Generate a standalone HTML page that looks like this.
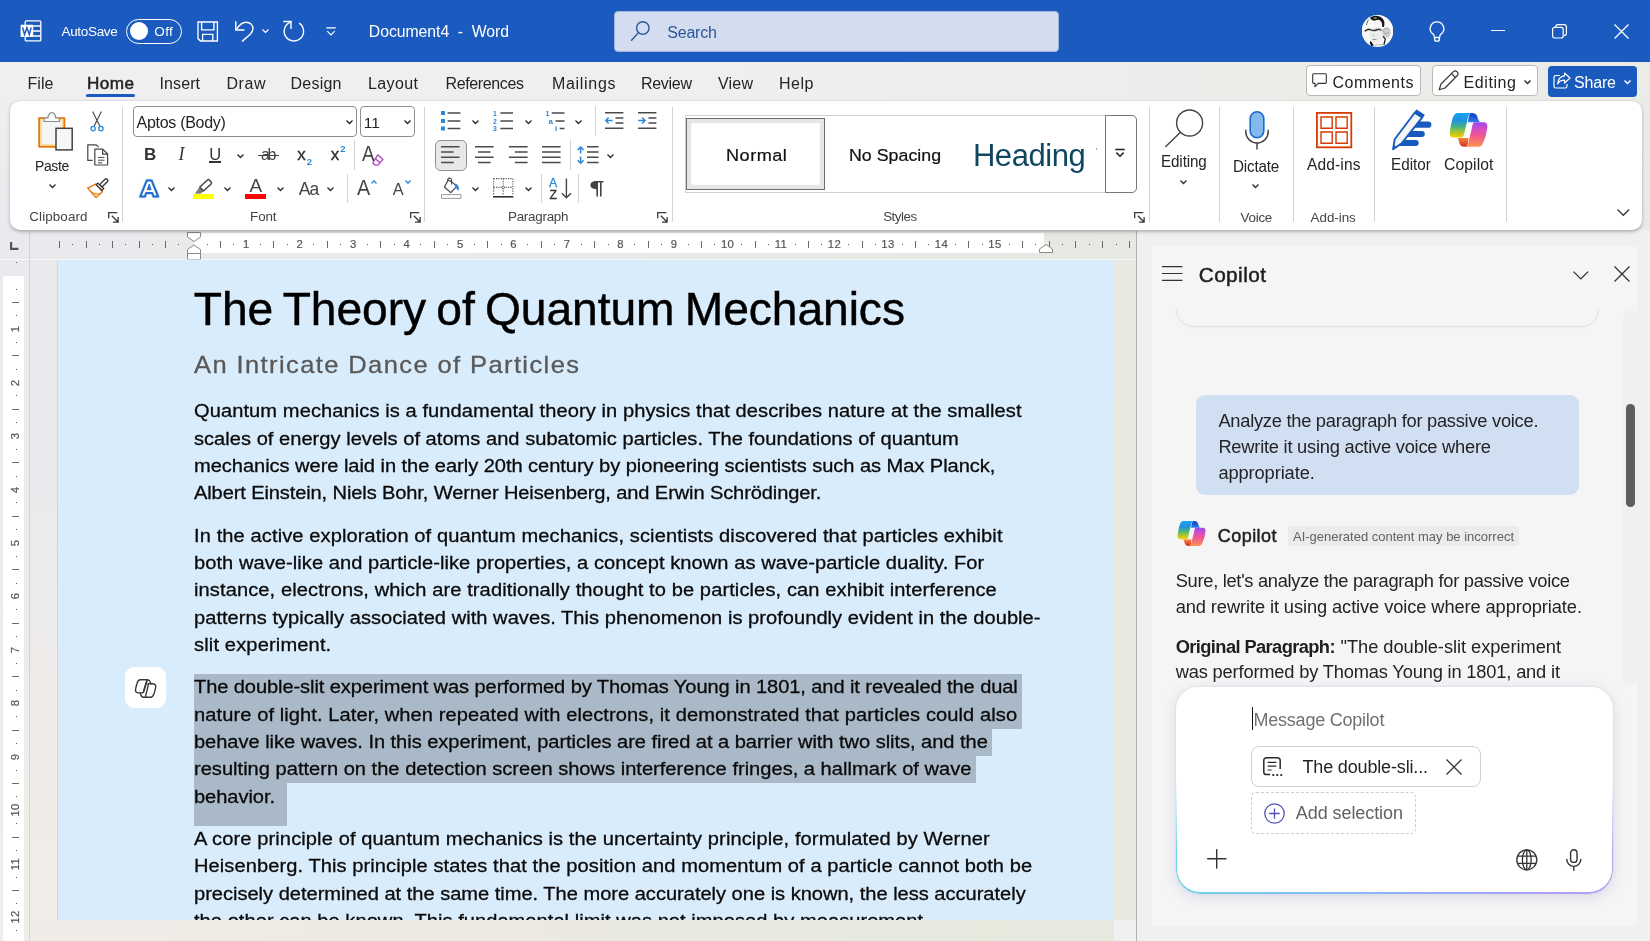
<!DOCTYPE html>
<html lang="en"><head><meta charset="utf-8"><title>Document4 - Word</title>
<style>
html,body{margin:0;padding:0;font-family:"Liberation Sans",sans-serif}
head,head *{font-family:"Liberation Sans",sans-serif}
body{width:1650px;height:941px;overflow:hidden;position:relative;background:#f0f0f0;font-family:"Liberation Sans",sans-serif;color:#242424;font-size:16px}
.a{position:absolute}
svg{position:absolute;overflow:visible}
#titlebar{left:0;top:0;width:1650px;height:62px;background:#1b5abe}
#tabs{left:0;top:62px;width:1650px;height:40px;background:linear-gradient(90deg,#efeff1 0,#efeff0 45%,#ecece9 80%,#ebebe8 100%)}
.w{color:#fff}
.sep{position:absolute;width:1px;background:#d4d4d4}
.chev{position:absolute;width:7px;height:4px}
/* rulers */
.ht{position:absolute;top:241px;width:1px;height:7px;background:#6a6a6a}
.hd{position:absolute;top:244px;width:1px;height:1px;background:#555}
.hn{position:absolute;top:237px;width:20px;text-align:center;font-size:11.300px;-webkit-text-stroke:.2px #555;font-weight:normal;color:#555;line-height:14px;letter-spacing:.3px}
.vt{position:absolute;left:12px;width:7px;height:1px;background:#6a6a6a}
.vd{position:absolute;left:15.5px;width:1px;height:1px;background:#555}
.vn{position:absolute;left:4.5px;width:20px;height:20px;text-align:center;font-size:11.300px;-webkit-text-stroke:.2px #555;font-weight:normal;color:#555;line-height:20px;transform:rotate(-90deg);letter-spacing:.3px}
.d{color:#0a0a0a;-webkit-text-stroke:.3px #0a0a0a}
.p{color:#242424}
#app{position:absolute;left:0;top:0;width:1650px;height:941px;overflow:hidden;will-change:transform}
</style></head><body><div id="app">
<div id="titlebar" class="a">
<!-- word icon -->
<svg style="left:20px;top:20px" width="22" height="22" viewBox="0 0 22 22">
<rect x="5.2" y="0.9" width="15.6" height="20" rx="1" fill="none" stroke="#fff" stroke-width="1.3"></rect>
<path d="M12.5 6h8M12.5 11h8M12.5 16h8" stroke="#fff" stroke-width="1.3"></path>
<rect x="0.6" y="4.8" width="12.6" height="12.2" rx=".6" fill="#fff"></rect>
<path d="M2.6 7.4l1.9 7 2.4-6.6 2.4 6.6 1.9-7" fill="none" stroke="#1b5abe" stroke-width="1.5" stroke-linejoin="miter"></path>
</svg>
<span class="w" style="position: absolute; white-space: pre; line-height: 1; font-size: 13.5px; left: 61.5px; top: 25px; letter-spacing: -0.321px; transform: none;">AutoSave</span>
<div class="a" style="left:125.5px;top:18.5px;width:54.5px;height:23.5px;border:1px solid #fff;border-radius:13px"></div>
<div class="a" style="left:129.5px;top:22px;width:18px;height:18px;border-radius:9px;background:#fff"></div>
<span class="w" style="position: absolute; white-space: pre; line-height: 1; font-size: 13.5px; left: 154.3px; top: 25px; letter-spacing: 0.367px; transform: none;">Off</span>
<!-- save -->
<svg style="left:197px;top:20.5px" width="22" height="21" viewBox="0 0 22 21" fill="none" stroke="#fff" stroke-width="1.35" stroke-linejoin="miter">
<path d="M1 1H20.4V20H3.400L1 17.600z"></path>
<path d="M4.600 1v7.800h12.300V1"></path><path d="M5.600 20v-6.600h10.200V20"></path>
</svg>
<!-- undo -->
<svg style="left:235px;top:20.5px" width="20" height="21" viewBox="0 0 20 21" fill="none" stroke="#fff" stroke-width="1.4" stroke-linecap="round" stroke-linejoin="miter">
<path d="M.8.8V9H9"></path><path d="M1.500 8.300C4.500 3.500 8 1.200 11 1.200c4 0 7 2.800 7 6.400 0 2.400-1 3.900-3 5.900L7.400 20.100"></path>
</svg>
<svg class="chev" style="left:262px;top:28.6px" viewBox="0 0 7 4"><path d="M.5.5l3 3 3-3" fill="none" stroke="#fff" stroke-width="1.2"></path></svg>
<!-- redo -->
<svg style="left:282.5px;top:21px" width="22" height="21" viewBox="0 0 22 21" fill="none" stroke="#fff" stroke-width="1.4" stroke-linecap="round" stroke-linejoin="miter">
<path d="M.7.500H8V7.600"></path><path d="M16.500 2.400A9.700 9.700 0 1 1 7.800 1.100"></path>
</svg>
<!-- qat customize -->
<svg style="left:326px;top:27px" width="10" height="9" viewBox="0 0 10 9" fill="none" stroke="#fff" stroke-width="1.2"><path d="M.3.8h9.400M1.300 4.200l3.700 3.700 3.700-3.700"></path></svg>
<span class="w" style="position: absolute; white-space: pre; line-height: 1; font-size: 15.8px; left: 368.8px; top: 24px; letter-spacing: -0.051px; transform: none;">Document4  -  Word</span>
<!-- search -->
<div class="a" style="left:614px;top:11px;width:443px;height:39px;border:1px solid #9fb3d9;border-radius:4px;background:#d3ddef"></div>
<svg style="left:631px;top:21px" width="19" height="20" viewBox="0 0 19 20" fill="none" stroke="#2b579a" stroke-width="1.400"><circle cx="11.800" cy="7" r="6.200"></circle><path d="M7.400 11.600L.6 19.200" stroke-linecap="round"></path></svg>
<span style="color: rgb(43, 87, 154); position: absolute; white-space: pre; line-height: 1; font-size: 16px; left: 667.3px; top: 25px; letter-spacing: -0.241px; transform: none;">Search</span>
<!-- avatar -->
<div class="a" style="left:1361.700px;top:15.400px;width:31.200px;height:31.200px;border-radius:16px;background:#f7f7f7;overflow:hidden">
<svg style="left:0;top:0" width="31.200" height="31.200" viewBox="0 0 31.200 31.200">
<rect width="31.200" height="31.200" fill="#f8f8f8"></rect>
<ellipse cx="14" cy="20" rx="7" ry="8" fill="#ececec"></ellipse>
<ellipse cx="24.500" cy="17.500" rx="4.200" ry="5.200" fill="#cfcfcf"></ellipse>
<path d="M21.500 14.500q3-2.500 6 0M22 18q2.500 1.500 5-.5" stroke="#9a9a9a" stroke-width=".8" fill="none"></path>
<path d="M8 2.800C10 1.200 12 .8 13.500.8c3 0 5.500 1 6.700 2.400 1.600 1.600 2.300 3.400 2.200 5.200 0 1.400-.2 2.600-.5 3.700l-1.800-.4c.2-1.600 0-3.300-.6-4.600-.8-1.400-1.800-2.100-3-2.300-1.600-.2-3 .9-4.500.9-1 0-1.900-.5-2.600-1.200C8.600 4 8.200 3.400 8 2.800z" fill="#161616"></path>
<ellipse cx="13.200" cy="3.100" rx="2" ry=".8" fill="#8d8d8d"></ellipse>
<path d="M6.800 4.600C5.400 6.300 4.700 8 4.500 10" stroke="#555" stroke-width=".9" fill="none"></path>
<path d="M3.300 15.900Q6 13.400 9 14.900q3 1.400 6-.2 2-.8 3.500 0" stroke="#3a3a3a" stroke-width="1.600" fill="none" stroke-linecap="round"></path>
<path d="M18.500 14.800q2 .3 3 1.500" stroke="#777" stroke-width=".9" fill="none"></path>
<path d="M10.500 24.300q2 .8 4 0" stroke="#7a7a7a" stroke-width=".9" fill="none"></path>
<path d="M11.800 19.500q-.8 1.600.4 2.300" stroke="#b5b5b5" stroke-width=".8" fill="none"></path>
<path d="M8.500 25.800l3.500 4.800-3 .4-1.200-3.200z" fill="#111"></path>
<path d="M21 21.400l2.300 2.800-1.400 5.600" stroke="#1d1d1d" stroke-width="1.300" fill="none" stroke-linejoin="round"></path>
<path d="M12.500 30.500q4-1.500 8.500-.5" stroke="#999" stroke-width=".7" fill="none"></path>
</svg></div>
<!-- lightbulb -->
<svg style="left:1428px;top:20.500px" width="18" height="21" viewBox="0 0 18 21" fill="none" stroke="#fff" stroke-width="1.300" stroke-linejoin="round"><path d="M9 .8a6.800 6.800 0 0 0-4 12.300c.7.600 1 1.200 1.200 2.200l.2 1.200h5.200l.2-1.200c.2-1 .5-1.600 1.200-2.200A6.800 6.800 0 0 0 9 .8z"></path><path d="M6.600 16.500v1.700a2 2 0 0 0 2 2h.8a2 2 0 0 0 2-2v-1.700"></path></svg>
<!-- window buttons -->
<div class="a" style="left:1491px;top:30px;width:14px;height:1.300px;background:#fff"></div>
<svg style="left:1552px;top:24px" width="15" height="15" viewBox="0 0 15 15" fill="none" stroke="#fff" stroke-width="1.200"><rect x=".6" y="3.400" width="10.600" height="10.600" rx="2"></rect><path d="M3.600 3.200V2.800A2.200 2.200 0 0 1 5.800.6h6.400a2.200 2.200 0 0 1 2.200 2.200v6.400a2.200 2.200 0 0 1-2.200 2.200h-.4"></path></svg>
<svg style="left:1614px;top:24px" width="15" height="15" viewBox="0 0 15 15" fill="none" stroke="#fff" stroke-width="1.300"><path d="M.5.5l14 14M14.500.5l-14 14"></path></svg>
</div>
<!-- DOC AREA backgrounds -->
<div class="a" style="left:0;top:230px;width:1136px;height:711px;background:linear-gradient(90deg,#eaeaee 0,#eaeaed 18%,#e8e9e6 70%,#e6e8e1 100%)"></div>
<!-- left gutter pink-beige fade -->
<div class="a" style="left:0;top:260px;width:58px;height:681px;background:linear-gradient(180deg,rgba(240,236,232,0) 0,rgba(240,236,232,0) 30%,rgba(240,236,232,.75) 62%,#f0ece8 85%)"></div>
<!-- bottom strip (beige gradient) -->
<div class="a" style="left:30px;top:920px;width:1084px;height:21px;background:linear-gradient(90deg,#f0ece8 0%,#eeebe5 25%,#eae9e0 55%,#e6e9dd 100%)"></div>
<div class="a" style="left:1114px;top:920px;width:22px;height:21px;background:#f0f0f0"></div>
<!-- right strip beside page -->
<div class="a" style="left:1114px;top:260px;width:22px;height:660px;background:linear-gradient(180deg,#e7e9e2,#e6e9dd 40%)"></div>
<!-- ribbon shadow on top of doc -->
<!-- horizontal ruler -->
<div class="a" style="left:193.600px;top:233px;width:850.500px;height:20.300px;background:#fff"></div>
<i class="ht" style="left:58.9px"></i><i class="hd" style="left:71.9px"></i><i class="ht" style="left:85.5px"></i><i class="hd" style="left:98.5px"></i><i class="ht" style="left:112.1px"></i><i class="hd" style="left:125.1px"></i><i class="ht" style="left:138.7px"></i><i class="hd" style="left:151.7px"></i><i class="ht" style="left:165.3px"></i><i class="hd" style="left:178.3px"></i><i class="hd" style="left:206.5px"></i><i class="ht" style="left:219.8px"></i><i class="hd" style="left:233.2px"></i><b class="hn" style="left:236.3px">1</b><i class="hd" style="left:259.9px"></i><i class="ht" style="left:273.3px"></i><i class="hd" style="left:286.7px"></i><b class="hn" style="left:289.7px">2</b><i class="hd" style="left:313.4px"></i><i class="ht" style="left:326.8px"></i><i class="hd" style="left:340.1px"></i><b class="hn" style="left:343.2px">3</b><i class="hd" style="left:366.9px"></i><i class="ht" style="left:380.2px"></i><i class="hd" style="left:393.6px"></i><b class="hn" style="left:396.7px">4</b><i class="hd" style="left:420.3px"></i><i class="ht" style="left:433.7px"></i><i class="hd" style="left:447.1px"></i><b class="hn" style="left:450.2px">5</b><i class="hd" style="left:473.8px"></i><i class="ht" style="left:487.2px"></i><i class="hd" style="left:500.6px"></i><b class="hn" style="left:503.6px">6</b><i class="hd" style="left:527.3px"></i><i class="ht" style="left:540.7px"></i><i class="hd" style="left:554.0px"></i><b class="hn" style="left:557.1px">7</b><i class="hd" style="left:580.8px"></i><i class="ht" style="left:594.1px"></i><i class="hd" style="left:607.5px"></i><b class="hn" style="left:610.6px">8</b><i class="hd" style="left:634.2px"></i><i class="ht" style="left:647.6px"></i><i class="hd" style="left:661.0px"></i><b class="hn" style="left:664.0px">9</b><i class="hd" style="left:687.7px"></i><i class="ht" style="left:701.1px"></i><i class="hd" style="left:714.4px"></i><b class="hn" style="left:717.5px">10</b><i class="hd" style="left:741.2px"></i><i class="ht" style="left:754.5px"></i><i class="hd" style="left:767.9px"></i><b class="hn" style="left:771.0px">11</b><i class="hd" style="left:794.6px"></i><i class="ht" style="left:808.0px"></i><i class="hd" style="left:821.4px"></i><b class="hn" style="left:824.4px">12</b><i class="hd" style="left:848.1px"></i><i class="ht" style="left:861.5px"></i><i class="hd" style="left:874.8px"></i><b class="hn" style="left:877.9px">13</b><i class="hd" style="left:901.6px"></i><i class="ht" style="left:914.9px"></i><i class="hd" style="left:928.3px"></i><b class="hn" style="left:931.4px">14</b><i class="hd" style="left:955.0px"></i><i class="ht" style="left:968.4px"></i><i class="hd" style="left:981.8px"></i><b class="hn" style="left:984.9px">15</b><i class="hd" style="left:1008.5px"></i><i class="ht" style="left:1021.9px"></i><i class="hd" style="left:1035.3px"></i><i class="ht" style="left:1048.6px"></i><i class="hd" style="left:1062.0px"></i><i class="ht" style="left:1075.4px"></i><i class="hd" style="left:1088.7px"></i><i class="ht" style="left:1102.1px"></i><i class="hd" style="left:1115.5px"></i><i class="ht" style="left:1128.8px"></i>
<!-- indent markers -->
<svg style="left:186.600px;top:232px" width="14" height="28" viewBox="0 0 14 28" fill="#fff" stroke="#8a8a8a" stroke-width="1">
<path d="M.5.500h13v4.500L7 9.500.5 5z"></path><path d="M.5 21.500V17.500L7 13l6.500 4.500v4z"></path><rect x=".5" y="21.500" width="13" height="6"></rect></svg>
<svg style="left:1038.900px;top:244.400px" width="14" height="10" viewBox="0 0 14 10" fill="#fff" stroke="#8a8a8a" stroke-width="1"><path d="M.5 8.500V5L7 .6 13.500 5v3.500z"></path></svg>
<!-- tab selector -->
<svg style="left:9.600px;top:242.400px" width="9" height="8" viewBox="0 0 9 8"><path d="M0 0h2.200v5.800H8.400V8H0z" fill="#555"></path></svg>
<!-- vertical ruler -->
<div class="a" style="left:3.200px;top:276.300px;width:20.900px;height:665px;background:#fff"></div>
<div class="a" style="left:0;top:0;width:30px;height:941px;overflow:hidden"><i class="vd" style="top:261.7px"></i><i class="vd" style="top:288.5px"></i><i class="vt" style="top:301.8px"></i><i class="vd" style="top:315.2px"></i><b class="vn" style="top:319.1px">1</b><i class="vd" style="top:341.9px"></i><i class="vt" style="top:355.3px"></i><i class="vd" style="top:368.7px"></i><b class="vn" style="top:372.5px">2</b><i class="vd" style="top:395.4px"></i><i class="vt" style="top:408.8px"></i><i class="vd" style="top:422.1px"></i><b class="vn" style="top:426.0px">3</b><i class="vd" style="top:448.9px"></i><i class="vt" style="top:462.2px"></i><i class="vd" style="top:475.6px"></i><b class="vn" style="top:479.5px">4</b><i class="vd" style="top:502.3px"></i><i class="vt" style="top:515.7px"></i><i class="vd" style="top:529.1px"></i><b class="vn" style="top:533.0px">5</b><i class="vd" style="top:555.8px"></i><i class="vt" style="top:569.2px"></i><i class="vd" style="top:582.6px"></i><b class="vn" style="top:586.4px">6</b><i class="vd" style="top:609.3px"></i><i class="vt" style="top:622.7px"></i><i class="vd" style="top:636.0px"></i><b class="vn" style="top:639.9px">7</b><i class="vd" style="top:662.8px"></i><i class="vt" style="top:676.1px"></i><i class="vd" style="top:689.5px"></i><b class="vn" style="top:693.4px">8</b><i class="vd" style="top:716.2px"></i><i class="vt" style="top:729.6px"></i><i class="vd" style="top:743.0px"></i><b class="vn" style="top:746.8px">9</b><i class="vd" style="top:769.7px"></i><i class="vt" style="top:783.1px"></i><i class="vd" style="top:796.4px"></i><b class="vn" style="top:800.3px">10</b><i class="vd" style="top:823.2px"></i><i class="vt" style="top:836.5px"></i><i class="vd" style="top:849.9px"></i><b class="vn" style="top:853.8px">11</b><i class="vd" style="top:876.6px"></i><i class="vt" style="top:890.0px"></i><i class="vd" style="top:903.4px"></i><b class="vn" style="top:907.2px">12</b><i class="vd" style="top:930.1px"></i><i class="vt" style="top:943.5px"></i></div>
<div class="a" style="left:29px;top:230.500px;width:1px;height:711px;background:#d2d2d4"></div>
<div class="a" style="left:0;top:259px;width:1136px;height:1px;background:rgba(255,255,255,.55)"></div>
<!-- page -->
<div class="a" style="left:57px;top:260px;width:1px;height:660px;background:#d3d6da"></div>
<div class="a" style="left:58px;top:260px;width:1056px;height:660px;background:#d9ecfc;overflow:hidden">
<div class="a" style="left:-58px;top:-260px">
<!-- selection highlight (coords in page space: left = x, top = y) -->
<div class="a" style="left:193.700px;top:674px;width:828.600px;height:27.400px;background:#aab9c8"></div>
<div class="a" style="left:193.700px;top:701.300px;width:827.900px;height:27.400px;background:#aab9c8"></div>
<div class="a" style="left:193.700px;top:728.600px;width:798.600px;height:27.400px;background:#aab9c8"></div>
<div class="a" style="left:193.700px;top:755.900px;width:782.100px;height:27.400px;background:#aab9c8"></div>
<div class="a" style="left:193.700px;top:783.200px;width:93.500px;height:42.400px;background:#aab9c8"></div>
</div></div>
<!-- pane divider -->
<div class="a" style="left:1135.700px;top:231px;width:1.400px;height:710px;background:#b2b2b4"></div>
<div class="a" style="left:1137px;top:230px;width:513px;height:711px;background:#f0f0f0"></div>
<!-- copilot margin icon -->
<div class="a" style="left:125px;top:667px;width:41.100px;height:41.400px;border-radius:9px;background:#fff"></div>
<svg style="left:135px;top:678.500px" width="22" height="19" viewBox="0 0 22 19" fill="none" stroke="#383838" stroke-width="1.400" stroke-linejoin="round" stroke-linecap="round">
<path d="M5.400.8h7L8.900 12.200c-.3 1.100-.9 1.700-2.100 1.700H3.400C1.400 13.900.2 12.600.5 10.800.8 8.600 1.300 6.400 2 4.400 2.700 2 3.600.8 5.400.8z"></path>
<path d="M12.400.8c1.500 0 2.400.8 2.800 2.100l.6 1.900"></path>
<path d="M13.400 4.800h4.300c2.100 0 3.300 1.400 3 3.200-.3 2.200-.9 4.600-1.600 6.600-.8 2.400-1.800 3.700-3.600 3.700h-5.200L13 7.400c.3-1.200-.4-2.600.4-2.600z"></path>
<path d="M5.200 13.900l.6 1.900c.4 1.500 1.400 2.500 3 2.500h1.600"></path>
<path d="M11.400 2.600L8.600 12"></path>
</svg>
<!-- DOC TEXT -->
<span style="color: rgb(0, 0, 0); -webkit-text-stroke: 0.45px rgb(0, 0, 0); position: absolute; white-space: pre; line-height: 1; font-size: 46.2px; left: 193.8px; top: 286px; letter-spacing: -0.064px; word-spacing: -2.5px; transform: none;">The Theory of Quantum Mechanics</span>
<span style="color: rgb(89, 89, 89); -webkit-text-stroke: 0.3px rgb(89, 89, 89); position: absolute; white-space: pre; line-height: 1; font-size: 23.2px; left: 194px; top: 354px; letter-spacing: 1.27px; transform: scaleX(1.1); transform-origin: 0px 0px;">An Intricate Dance of Particles</span>
<span class="d" style="position: absolute; white-space: pre; line-height: 1; font-size: 19.1px; left: 193.8px; top: 401px; letter-spacing: 0.074px; transform: scaleX(1.052); transform-origin: 0px 0px;">Quantum mechanics is a fundamental theory in physics that describes nature at the smallest</span>
<span class="d" style="position: absolute; white-space: pre; line-height: 1; font-size: 19.1px; left: 193.8px; top: 429px; letter-spacing: 0.017px; transform: scaleX(1.052); transform-origin: 0px 0px;">scales of energy levels of atoms and subatomic particles. The foundations of quantum</span>
<span class="d" style="position: absolute; white-space: pre; line-height: 1; font-size: 19.1px; left: 193.8px; top: 456px; letter-spacing: -0.05px; transform: scaleX(1.052); transform-origin: 0px 0px;">mechanics were laid in the early 20th century by pioneering scientists such as Max Planck,</span>
<span class="d" style="position: absolute; white-space: pre; line-height: 1; font-size: 19.1px; left: 193.8px; top: 483px; letter-spacing: -0.12px; transform: scaleX(1.052); transform-origin: 0px 0px;">Albert Einstein, Niels Bohr, Werner Heisenberg, and Erwin Schrödinger.</span>
<span class="d" style="position: absolute; white-space: pre; line-height: 1; font-size: 19.1px; left: 193.8px; top: 526px; letter-spacing: 0.095px; transform: scaleX(1.052); transform-origin: 0px 0px;">In the active exploration of quantum mechanics, scientists discovered that particles exhibit</span>
<span class="d" style="position: absolute; white-space: pre; line-height: 1; font-size: 19.1px; left: 193.8px; top: 553px; letter-spacing: 0.049px; transform: scaleX(1.052); transform-origin: 0px 0px;">both wave-like and particle-like properties, a concept known as wave-particle duality. For</span>
<span class="d" style="position: absolute; white-space: pre; line-height: 1; font-size: 19.1px; left: 193.8px; top: 580px; letter-spacing: 0.091px; transform: scaleX(1.052); transform-origin: 0px 0px;">instance, electrons, which are traditionally thought to be particles, can exhibit interference</span>
<span class="d" style="position: absolute; white-space: pre; line-height: 1; font-size: 19.1px; left: 193.8px; top: 608px; letter-spacing: 0.028px; transform: scaleX(1.052); transform-origin: 0px 0px;">patterns typically associated with waves. This phenomenon is profoundly evident in the double-</span>
<span class="d" style="position: absolute; white-space: pre; line-height: 1; font-size: 19.1px; left: 193.8px; top: 635px; letter-spacing: 0.134px; transform: scaleX(1.052); transform-origin: 0px 0px;">slit experiment.</span>
<span class="d" style="position: absolute; white-space: pre; line-height: 1; font-size: 19.1px; left: 193.8px; top: 677px; letter-spacing: -0.094px; transform: scaleX(1.052); transform-origin: 0px 0px;">The double-slit experiment was performed by Thomas Young in 1801, and it revealed the dual</span>
<span class="d" style="position: absolute; white-space: pre; line-height: 1; font-size: 19.1px; left: 193.8px; top: 705px; letter-spacing: 0.081px; transform: scaleX(1.052); transform-origin: 0px 0px;">nature of light. Later, when repeated with electrons, it demonstrated that particles could also</span>
<span class="d" style="position: absolute; white-space: pre; line-height: 1; font-size: 19.1px; left: 193.8px; top: 732px; letter-spacing: -0.045px; transform: scaleX(1.052); transform-origin: 0px 0px;">behave like waves. In this experiment, particles are fired at a barrier with two slits, and the</span>
<span class="d" style="position: absolute; white-space: pre; line-height: 1; font-size: 19.1px; left: 193.8px; top: 759px; letter-spacing: 0.003px; transform: scaleX(1.052); transform-origin: 0px 0px;">resulting pattern on the detection screen shows interference fringes, a hallmark of wave</span>
<span class="d" style="position: absolute; white-space: pre; line-height: 1; font-size: 19.1px; left: 193.8px; top: 787px; letter-spacing: -0.051px; transform: scaleX(1.052); transform-origin: 0px 0px;">behavior.</span>
<span class="d" style="position: absolute; white-space: pre; line-height: 1; font-size: 19.1px; left: 193.8px; top: 829px; letter-spacing: 0.097px; transform: scaleX(1.052); transform-origin: 0px 0px;">A core principle of quantum mechanics is the uncertainty principle, formulated by Werner</span>
<span class="d" style="position: absolute; white-space: pre; line-height: 1; font-size: 19.1px; left: 193.8px; top: 856px; letter-spacing: 0.069px; transform: scaleX(1.052); transform-origin: 0px 0px;">Heisenberg. This principle states that the position and momentum of a particle cannot both be</span>
<span class="d" style="position: absolute; white-space: pre; line-height: 1; font-size: 19.1px; left: 193.8px; top: 884px; letter-spacing: -0.02px; transform: scaleX(1.052); transform-origin: 0px 0px;">precisely determined at the same time. The more accurately one is known, the less accurately</span>
<div class="a" style="left:58px;top:260px;width:1056px;height:660px;overflow:hidden"><span class="d" style="position: absolute; white-space: pre; line-height: 1; font-size: 19.1px; left: 135.8px; top: 651px; letter-spacing: 0.033px; transform: scaleX(1.052); transform-origin: 0px 0px;">the other can be known. This fundamental limit was not imposed by measurement</span></div>
<!-- COPILOT PANE -->
<div class="a" style="left:1151.500px;top:245.800px;width:485.500px;height:680.300px;background:#f5f5f5"></div>
<!-- header -->
<svg style="left:1162.300px;top:266px" width="21" height="15" viewBox="0 0 21 15" stroke="#333" stroke-width="1.200"><path d="M0 .7h20.400M0 7.500h20.400M0 14.300h20.400"></path></svg>
<span style="color: rgb(31, 31, 31); -webkit-text-stroke: 0.5px rgb(31, 31, 31); position: absolute; white-space: pre; line-height: 1; font-size: 20.8px; left: 1198.7px; top: 265px; letter-spacing: 0.425px; transform: none;">Copilot</span>
<svg style="left:1572.500px;top:271px" width="16" height="9" viewBox="0 0 16 9" fill="none" stroke="#333" stroke-width="1.300"><path d="M.5.600l7.300 7.300L15.100.6"></path></svg>
<svg style="left:1614px;top:266px" width="16" height="16" viewBox="0 0 16 16" fill="none" stroke="#333" stroke-width="1.300"><path d="M.5.500l15 15M15.500.5l-15 15"></path></svg>
<!-- previous card bottom -->
<div class="a" style="left:1151.500px;top:309px;width:470px;height:21px;overflow:hidden"><div class="a" style="left:24px;top:-49px;width:421.500px;height:64.700px;border:1px solid #e2e2e2;border-radius:18px;background:#f5f5f5;box-shadow:0 1px 2px rgba(0,0,0,.04)"></div></div>
<!-- scroll track + thumb -->
<div class="a" style="left:1623px;top:310px;width:14px;height:376px;border-radius:7px;background:#f0f0f0"></div>
<div class="a" style="left:1626px;top:403.600px;width:8.600px;height:103.400px;border-radius:4.300px;background:#5e5e5e"></div>
<!-- user bubble -->
<div class="a" style="left:1196px;top:395px;width:382.500px;height:99.700px;border-radius:9px;background:#d1dff3"></div>
<span class="p" style="position: absolute; white-space: pre; line-height: 1; font-size: 18.3px; left: 1218.4px; top: 412px; letter-spacing: -0.261px; transform: none;">Analyze the paragraph for passive voice.</span>
<span class="p" style="position: absolute; white-space: pre; line-height: 1; font-size: 18.3px; left: 1218.4px; top: 438px; letter-spacing: -0.231px; transform: none;">Rewrite it using active voice where</span>
<span class="p" style="position: absolute; white-space: pre; line-height: 1; font-size: 18.3px; left: 1218.4px; top: 464px; letter-spacing: -0.107px; transform: none;">appropriate.</span>
<!-- copilot response header -->
<svg style="left:1177px;top:520px" width="29" height="27"><use href="#copilot"></use></svg>
<span style="color: rgb(31, 31, 31); -webkit-text-stroke: 0.5px rgb(31, 31, 31); position: absolute; white-space: pre; line-height: 1; font-size: 18px; left: 1217.7px; top: 527px; letter-spacing: 0.478px; transform: none;">Copilot</span>
<div class="a" style="left:1287.800px;top:526.200px;width:231px;height:20.300px;border-radius:4px;background:#ebebeb"></div>
<span style="color: rgb(97, 97, 97); position: absolute; white-space: pre; line-height: 1; font-size: 13px; left: 1293px; top: 530px; letter-spacing: -0.003px; transform: none;">AI-generated content may be incorrect</span>
<!-- response text -->
<span class="p" style="position: absolute; white-space: pre; line-height: 1; font-size: 18.3px; left: 1175.7px; top: 572px; letter-spacing: -0.293px; transform: none;">Sure, let's analyze the paragraph for passive voice</span>
<span class="p" style="position: absolute; white-space: pre; line-height: 1; font-size: 18.3px; left: 1175.7px; top: 598px; letter-spacing: -0.103px; transform: none;">and rewrite it using active voice where appropriate.</span>
<span class="p" style="font-weight: bold; color: rgb(31, 31, 31); position: absolute; white-space: pre; line-height: 1; font-size: 18.3px; left: 1175.7px; top: 638px; letter-spacing: -0.604px; transform: none;">Original Paragraph:</span>
<span class="p" style="position: absolute; white-space: pre; line-height: 1; font-size: 18.3px; left: 1340.5px; top: 638px; letter-spacing: -0.055px; transform: none;">"The double-slit experiment</span>
<span class="p" style="position: absolute; white-space: pre; line-height: 1; font-size: 18.3px; left: 1175.7px; top: 663px; letter-spacing: -0.174px; transform: none;">was performed by Thomas Young in 1801, and it</span>
<!-- input box -->
<div class="a" style="left:1175.900px;top:687px;width:437.200px;height:206.600px;border-radius:22px 22px 24px 24px;box-shadow:0 3px 14px rgba(110,110,190,.20),0 0 3px rgba(0,0,0,.10);background:#fff"></div>
<div class="a" style="left:1175.900px;top:687px;width:437.200px;height:206.600px;border-radius:22px 22px 24px 24px;opacity:.9;background:linear-gradient(90deg,#62cfe6 0,#79b6f4 35%,#9a9cf2 75%,#b596f0 100%);-webkit-mask-image:linear-gradient(180deg,transparent 0,transparent 45%,#000 80%);mask-image:linear-gradient(180deg,transparent 0,transparent 45%,#000 80%)"></div>
<div class="a" style="left:1177.200px;top:687px;width:434.600px;height:205.300px;border-radius:21px 21px 23px 23px;background:#fff"></div>
<div class="a" style="left:1252px;top:706.700px;width:1.200px;height:23px;background:#111"></div>
<span style="color: rgb(113, 113, 113); position: absolute; white-space: pre; line-height: 1; font-size: 18px; left: 1253.5px; top: 711px; letter-spacing: -0.227px; transform: none;">Message Copilot</span>
<!-- chip -->
<div class="a" style="left:1251.400px;top:746px;width:227.400px;height:38.700px;border:1px solid #d1d1d1;border-radius:8px;background:#fff"></div>
<svg style="left:1263px;top:756.600px" width="21" height="21" viewBox="0 0 21 21" fill="none" stroke="#2a2a2a" stroke-width="1.500" stroke-linejoin="round">
<path d="M7.200 17.600H3.400A2.600 2.600 0 0 1 .8 15V3.400A2.600 2.600 0 0 1 3.400.8h11.200a2.600 2.600 0 0 1 2.600 2.600V12"></path>
<path d="M4.600 5.400h8.800M4.600 9.200h8.800M4.600 13h4" stroke-width="1.200"></path>
<path d="M10.200 18h.100M14.200 18h.100M18.200 18h.100" stroke-width="2.200" stroke-linecap="round"></path></svg>
<span style="color: rgb(36, 36, 36); position: absolute; white-space: pre; line-height: 1; font-size: 18px; left: 1302.5px; top: 758px; letter-spacing: -0.161px; transform: none;">The double-sli...</span>
<svg style="left:1446px;top:759px" width="16" height="16" viewBox="0 0 16 16" fill="none" stroke="#333" stroke-width="1.300"><path d="M.5.500l15 15M15.500.5l-15 15"></path></svg>
<!-- add selection -->
<div class="a" style="left:1251.400px;top:792.300px;width:162.300px;height:39.700px;border:1px dashed #cdcdcd;border-radius:5px;background:#fff"></div>
<svg style="left:1264.200px;top:802.700px" width="21" height="21" viewBox="0 0 21 21" fill="none" stroke="#4f52b2" stroke-width="1.300" stroke-linecap="round"><circle cx="10.500" cy="10.500" r="9.700"></circle><path d="M10.500 5.800v9.400M5.800 10.500h9.400"></path></svg>
<span style="color: rgb(97, 97, 97); position: absolute; white-space: pre; line-height: 1; font-size: 18px; left: 1295.8px; top: 804px; letter-spacing: -0.073px; transform: none;">Add selection</span>
<!-- bottom icons -->
<svg style="left:1207.300px;top:848.800px" width="20" height="20" viewBox="0 0 20 20" stroke="#333" stroke-width="1.400" stroke-linecap="round"><path d="M9.700.6v18.400M.6 9.700h18.400"></path></svg>
<svg style="left:1516px;top:848.800px" width="22" height="22" viewBox="0 0 22 22" fill="none" stroke="#333" stroke-width="1.300"><circle cx="10.800" cy="10.800" r="10"></circle><ellipse cx="10.800" cy="10.800" rx="4.400" ry="10"></ellipse><path d="M10.800.8v20M1.600 7.200h18.400M1.600 14.400h18.400"></path></svg>
<svg style="left:1566px;top:848.800px" width="16" height="22" viewBox="0 0 16 22" fill="none" stroke="#333" stroke-width="1.400" stroke-linecap="round"><rect x="4.600" y=".8" width="6.400" height="12.600" rx="3.200"></rect><path d="M.8 10.400a7 7 0 0 0 14 0M7.800 17.600v3.600"></path></svg>
<div id="tabs" class="a"></div>
<span style="position: absolute; white-space: pre; line-height: 1; font-size: 16px; left: 27.5px; top: 76px; letter-spacing: 0.073px; transform: none;">File</span>
<span style="-webkit-text-stroke: 0.5px rgb(36, 36, 36); position: absolute; white-space: pre; line-height: 1; font-size: 16px; left: 86.5px; top: 76px; letter-spacing: 0.413px; transform: scaleX(1.07); transform-origin: 0px 0px;">Home</span>
<div class="a" style="left:86px;top:94px;width:49px;height:3px;border-radius:1.5px;background:#185abd"></div>
<span style="position: absolute; white-space: pre; line-height: 1; font-size: 16px; left: 159.5px; top: 76px; letter-spacing: 0.097px; transform: none;">Insert</span>
<span style="position: absolute; white-space: pre; line-height: 1; font-size: 16px; left: 226.5px; top: 76px; letter-spacing: 0.552px; transform: none;">Draw</span>
<span style="position: absolute; white-space: pre; line-height: 1; font-size: 16px; left: 290.5px; top: 76px; letter-spacing: 0.238px; transform: none;">Design</span>
<span style="position: absolute; white-space: pre; line-height: 1; font-size: 16px; left: 368px; top: 76px; letter-spacing: 0.391px; transform: none;">Layout</span>
<span style="position: absolute; white-space: pre; line-height: 1; font-size: 16px; left: 445.5px; top: 76px; letter-spacing: -0.37px; transform: none;">References</span>
<span style="position: absolute; white-space: pre; line-height: 1; font-size: 16px; left: 552px; top: 76px; letter-spacing: 0.688px; transform: none;">Mailings</span>
<span style="position: absolute; white-space: pre; line-height: 1; font-size: 16px; left: 641px; top: 76px; letter-spacing: -0.294px; transform: none;">Review</span>
<span style="position: absolute; white-space: pre; line-height: 1; font-size: 16px; left: 718px; top: 76px; letter-spacing: 0.203px; transform: none;">View</span>
<span style="position: absolute; white-space: pre; line-height: 1; font-size: 16px; left: 779px; top: 76px; letter-spacing: 0.531px; transform: none;">Help</span>
<!-- right buttons -->
<div class="a" style="left:1306px;top:65px;width:113px;height:29.400px;border:1px solid #b9b9b9;border-radius:4px;background:#fff"></div>
<svg style="left:1312px;top:73px" width="15" height="15" viewBox="0 0 15 15" fill="none" stroke="#333" stroke-width="1.100" stroke-linejoin="round"><path d="M1.500.8h12a.8.8 0 0 1 .8.8v8a.8.8 0 0 1-.8.8H6.200L3 13.600v-3.200H1.500a.8.8 0 0 1-.8-.8v-8a.8.8 0 0 1 .8-.8z"></path></svg>
<span style="position: absolute; white-space: pre; line-height: 1; font-size: 16px; left: 1332.5px; top: 75px; letter-spacing: 0.52px; transform: none;">Comments</span>
<div class="a" style="left:1431.500px;top:65px;width:104px;height:29.400px;border:1px solid #b9b9b9;border-radius:4px;background:#fff"></div>
<svg style="left:1438px;top:70px" width="21" height="21" viewBox="0 0 21 21" fill="none" stroke="#333" stroke-width="1.200" stroke-linejoin="round"><path d="M15.500 1.600a2.300 2.300 0 0 1 3.300 0l.6.600a2.300 2.300 0 0 1 0 3.300L7 18l-5.800 1.800L3 14z"></path><path d="M13.500 3.600l3.900 3.900"></path></svg>
<span style="position: absolute; white-space: pre; line-height: 1; font-size: 16px; left: 1463.5px; top: 75px; letter-spacing: 0.596px; transform: none;">Editing</span>
<svg class="chev" style="left:1524px;top:80px" viewBox="0 0 7 4"><path d="M.5.500l3 3 3-3" fill="none" stroke="#2a2a2a" stroke-width="1.500"></path></svg>
<div class="a" style="left:1547.500px;top:66px;width:89.500px;height:30.500px;border-radius:4px;background:#185abd"></div>
<svg style="left:1553px;top:72px" width="18" height="17" viewBox="0 0 18 17" fill="none" stroke="#fff" stroke-width="1.200" stroke-linejoin="round" stroke-linecap="round"><path d="M6.500 3.500H2.800A1.800 1.800 0 0 0 1 5.300v8.900A1.800 1.800 0 0 0 2.800 16h9.400a1.800 1.800 0 0 0 1.800-1.800v-1.700"></path><path d="M11.500 1l5.500 5-5.500 5V8.200C8 8.200 6 9.500 4.600 12 5 7.500 7.500 4.200 11.500 3.800z"></path></svg>
<span class="w" style="position: absolute; white-space: pre; line-height: 1; font-size: 16px; left: 1574px; top: 75px; letter-spacing: -0.176px; transform: none;">Share</span>
<svg class="chev" style="left:1624px;top:80px" viewBox="0 0 7 4"><path d="M.5.500l3 3 3-3" fill="none" stroke="#fff" stroke-width="1.500"></path></svg>
<!-- ribbon card -->
<div class="a" style="left:0;top:100px;width:24px;height:130px;background:linear-gradient(180deg,#efeff1 0,#eaeaee 80%)"></div>
<div class="a" style="left:1630px;top:100px;width:20px;height:130px;background:linear-gradient(180deg,#ebebe8 0,#e8e8e4 100%)"></div>
<div class="a" style="left:10px;top:100.5px;width:1632px;height:129px;border-radius:10px;background:#fff;box-shadow:0 1.500px 3.500px rgba(0,0,0,.26),0 0 1px rgba(0,0,0,.12)"></div>
<!-- CLIPBOARD -->
<svg style="left:37px;top:111px" width="37" height="40" viewBox="0 0 37 40" fill="none">
<rect x="2.100" y="7.100" width="25.300" height="28.700" fill="#fbdc94" stroke="#e8730e" stroke-width="1.700"></rect>
<rect x="4.700" y="9.700" width="20.100" height="23.500" fill="#f5f5f5"></rect>
<path d="M7.200 10.500V7h3.700c0-2.600 1.500-5.400 3.900-5.400s3.900 2.800 3.900 5.400h3.700v3.500z" fill="#fafafa" stroke="#8c8c8c" stroke-width="1.200" stroke-linejoin="round"></path>
<rect x="19" y="17.300" width="16.200" height="21.600" fill="#f7f7f7" stroke="#444" stroke-width="1.500"></rect>
</svg>
<span style="position: absolute; white-space: pre; line-height: 1; font-size: 15.5px; left: 35.4px; top: 158px; letter-spacing: -0.41px; transform: scaleX(0.9); transform-origin: 0px 0px;">Paste</span>
<svg class="chev" style="left:48.500px;top:184px" viewBox="0 0 7 4"><path d="M.5.500l3 3 3-3" fill="none" stroke="#2e2e2e" stroke-width="1.400"></path></svg>
<!-- cut -->
<svg style="left:89.900px;top:111.200px" width="14" height="21" viewBox="0 0 14 21" fill="none" stroke-width="1.100">
<path d="M2.600.5l7.300 14.800M11.400.5L4.100 15.300" stroke="#444"></path>
<circle cx="3.100" cy="17.600" r="2.200" stroke="#2b88d8" stroke-width="1.300"></circle><circle cx="10.900" cy="17.600" r="2.200" stroke="#2b88d8" stroke-width="1.300"></circle>
</svg>
<!-- copy -->
<svg style="left:86.500px;top:144px" width="22" height="22" viewBox="0 0 22 22" fill="none" stroke="#444" stroke-width="1.200" stroke-linejoin="round">
<path d="M5.600 16.400H.8V.8h8.400l2.400 2.400"></path>
<path d="M7.800 5.200h8l4.800 4.800v11H7.800z" fill="#fff"></path><path d="M15.600 5.400v4.800h4.800"></path>
<path d="M11 13.400h6.400M11 16.200h6.400M11 18.800h4.400" stroke-width="1"></path>
</svg>
<!-- format painter -->
<svg style="left:87px;top:177.500px" width="22" height="21" viewBox="0 0 22 21" fill="none" stroke-linejoin="round" stroke-linecap="round">
<path d="M9.200 5.800L.6 10.100l8.500 9.500 6.300-5.900z" fill="#fff" stroke="#e8730e" stroke-width="1.400"></path>
<path d="M3.400 13.300l5.700 6.300 4-3.800c-3.400.6-6.800-.2-9.700-2.500z" fill="#fbdc94" stroke="#e8730e" stroke-width="1"></path>
<path d="M14.800 6.800l4.400-4.300" stroke="#333" stroke-width="4.600"></path><path d="M14.800 6.800l4.400-4.300" stroke="#fff" stroke-width="1.900"></path>
<path d="M9.600 5.600l6.700 6.300" stroke="#333" stroke-width="3.800" stroke-linecap="butt"></path><path d="M10.400 6.400l5.100 4.800" stroke="#fff" stroke-width="1.100" stroke-linecap="butt"></path>
</svg>
<span style="color: rgb(68, 68, 68); position: absolute; white-space: pre; line-height: 1; font-size: 13.4px; left: 29.3px; top: 210px; letter-spacing: 0.109px; transform: none;">Clipboard</span>
<svg style="left:107.500px;top:212.300px" width="11" height="11" viewBox="0 0 11 11" fill="none" stroke="#3a3a3a" stroke-width="1.300"><path d="M.7 6.200V.7h8.600M3.800 3.800l6 6M10.100 5v5.100H5"></path></svg>
<div class="sep" style="left:122px;top:107px;height:115px"></div>
<!-- FONT -->
<div class="a" style="left:133.300px;top:106.200px;width:221.500px;height:28.700px;border:1px solid #8e8e8e;border-radius:4px;background:#fff"></div>
<span style="position: absolute; white-space: pre; line-height: 1; font-size: 16px; left: 136.5px; top: 115px; letter-spacing: -0.28px; transform: none;">Aptos (Body)</span>
<svg class="chev" style="left:346px;top:120px" viewBox="0 0 7 4"><path d="M.5.500l3 3 3-3" fill="none" stroke="#222" stroke-width="1.300"></path></svg>
<div class="a" style="left:360px;top:106.200px;width:52.700px;height:28.700px;border:1px solid #8e8e8e;border-radius:4px;background:#fff"></div>
<span style="position: absolute; white-space: pre; line-height: 1; font-size: 15.5px; left: 363.8px; top: 115px; letter-spacing: -0.094px; transform: none;">11</span>
<svg class="chev" style="left:403.500px;top:120px" viewBox="0 0 7 4"><path d="M.5.500l3 3 3-3" fill="none" stroke="#222" stroke-width="1.300"></path></svg>
<!-- row 2 -->
<span style="font-weight: bold; color: rgb(51, 51, 51); position: absolute; white-space: pre; line-height: 1; font-size: 17px; left: 144px; top: 146px; letter-spacing: -2.281px; transform: none;">B</span>
<span style="font-family: &quot;Liberation Serif&quot;, serif; font-style: italic; color: rgb(51, 51, 51); position: absolute; white-space: pre; line-height: 1; font-size: 18px; left: 178.5px; top: 145px; letter-spacing: 1px; transform: none;">I</span>
<span style="color: rgb(51, 51, 51); position: absolute; white-space: pre; line-height: 1; font-size: 16.5px; left: 209.3px; top: 146px; letter-spacing: 0.078px; transform: none;">U</span>
<div class="a" style="left:209.300px;top:161.400px;width:12px;height:1.300px;background:#333"></div>
<svg class="chev" style="left:236.800px;top:154px" viewBox="0 0 7 4"><path d="M.5.500l3 3 3-3" fill="none" stroke="#2e2e2e" stroke-width="1.400"></path></svg>
<span style="color: rgb(68, 68, 68); position: absolute; white-space: pre; line-height: 1; font-size: 16px; left: 261px; top: 147px; letter-spacing: -2.297px; transform: none;">ab</span>
<div class="a" style="left:258px;top:155.300px;width:21px;height:1.200px;background:#444"></div>
<span style="color: rgb(51, 51, 51); -webkit-text-stroke: 0.4px rgb(51, 51, 51); position: absolute; white-space: pre; line-height: 1; font-size: 17px; left: 297.3px; top: 146px; letter-spacing: 0.5px; transform: none;">x</span>
<span style="color: rgb(43, 136, 216); font-weight: bold; position: absolute; white-space: pre; line-height: 1; font-size: 9.5px; left: 306.8px; top: 157px; letter-spacing: -0.297px; transform: none;">2</span>
<span style="color: rgb(51, 51, 51); -webkit-text-stroke: 0.4px rgb(51, 51, 51); position: absolute; white-space: pre; line-height: 1; font-size: 17px; left: 330.7px; top: 146px; letter-spacing: 0.5px; transform: none;">x</span>
<span style="color: rgb(43, 136, 216); font-weight: bold; position: absolute; white-space: pre; line-height: 1; font-size: 9.5px; left: 340.3px; top: 144px; letter-spacing: -0.297px; transform: none;">2</span>
<div class="sep" style="left:354px;top:140.300px;height:29.500px"></div>
<!-- clear formatting -->
<span style="color: rgb(68, 68, 68); position: absolute; white-space: pre; line-height: 1; font-size: 21.5px; left: 362.2px; top: 144px; letter-spacing: -0.707px; transform: scaleX(0.88); transform-origin: 0px 0px;">A</span>
<svg style="left:371.500px;top:153.500px" width="12" height="12" viewBox="0 0 12 12" fill="#fff" stroke="#b146c2" stroke-width="1.300" stroke-linejoin="round"><path d="M5.800.8l5.200 4.600-5 5.800H3.200L.8 9z"></path><path d="M3 4.200l5 4.600"></path></svg>
<!-- row 3 -->
<svg style="left:139px;top:178.600px" width="21" height="19" viewBox="0 0 21 19" stroke-linejoin="round">
<path d="M1.300 17.600L7.900 1.400h4.600l6.600 16.200h-4.500l-1.300-3.500H7.100l-1.300 3.500z" fill="#fff" stroke="#bcd8f6" stroke-width="3.400"></path>
<path d="M1.300 17.600L7.900 1.400h4.600l6.600 16.200h-4.500l-1.300-3.500H7.100l-1.300 3.500z" fill="#fff" stroke="#1f6fc9" stroke-width="2"></path>
<path d="M8.300 10.700h3.800l-1.900-5.500z" fill="#2b7cd3" stroke="#1f6fc9" stroke-width="1"></path></svg>
<svg class="chev" style="left:167.500px;top:186.500px" viewBox="0 0 7 4"><path d="M.5.500l3 3 3-3" fill="none" stroke="#2e2e2e" stroke-width="1.400"></path></svg>
<!-- highlighter -->
<svg style="left:192.500px;top:178.500px" width="21" height="15" viewBox="0 0 21 15" fill="none" stroke-linejoin="round">
<path d="M6.900 8l3.400 4-2.500 2.200-5.200.1z" fill="#7c7c7c" stroke="#7c7c7c" stroke-width=".8"></path>
<path d="M6.900 8L14.400 1a1.500 1.500 0 0 1 2.100.2l1.600 1.900a1.500 1.500 0 0 1-.2 2.100L10.300 12z" fill="#fff" stroke="#444" stroke-width="1.500"></path>
</svg>
<div class="a" style="left:192.800px;top:194px;width:21.200px;height:4.900px;background:#ffff00"></div>
<svg class="chev" style="left:224px;top:186.500px" viewBox="0 0 7 4"><path d="M.5.500l3 3 3-3" fill="none" stroke="#2e2e2e" stroke-width="1.400"></path></svg>
<span style="color: rgb(68, 68, 68); position: absolute; white-space: pre; line-height: 1; font-size: 19px; left: 249.6px; top: 176px; letter-spacing: -0.187px; transform: none;">A</span>
<div class="a" style="left:245.300px;top:194px;width:20.800px;height:4.900px;background:#ff0000"></div>
<svg class="chev" style="left:276.500px;top:186.500px" viewBox="0 0 7 4"><path d="M.5.500l3 3 3-3" fill="none" stroke="#2e2e2e" stroke-width="1.400"></path></svg>
<span style="color: rgb(68, 68, 68); position: absolute; white-space: pre; line-height: 1; font-size: 17.5px; left: 298.7px; top: 181px; letter-spacing: -0.906px; transform: none;">Aa</span>
<svg class="chev" style="left:326.700px;top:186.500px" viewBox="0 0 7 4"><path d="M.5.500l3 3 3-3" fill="none" stroke="#2e2e2e" stroke-width="1.400"></path></svg>
<div class="sep" style="left:347px;top:173.700px;height:29.800px"></div>
<span style="color: rgb(68, 68, 68); position: absolute; white-space: pre; line-height: 1; font-size: 21.5px; left: 357px; top: 178px; letter-spacing: -0.213px; transform: scaleX(0.92); transform-origin: 0px 0px;">A</span>
<svg style="left:370.500px;top:179.500px" width="6" height="4" viewBox="0 0 6 4"><path d="M.5 3.500L3 .8l2.500 2.700" fill="none" stroke="#2b88d8" stroke-width="1.300"></path></svg>
<span style="color: rgb(68, 68, 68); position: absolute; white-space: pre; line-height: 1; font-size: 16.3px; left: 392.8px; top: 181px; letter-spacing: -0.375px; transform: none;">A</span>
<svg style="left:404.500px;top:180px" width="6" height="4" viewBox="0 0 6 4"><path d="M.5.500L3 3.200 5.500.5" fill="none" stroke="#2b88d8" stroke-width="1.300"></path></svg>
<span style="color: rgb(68, 68, 68); position: absolute; white-space: pre; line-height: 1; font-size: 13.4px; left: 250.1px; top: 210px; letter-spacing: -0.132px; transform: none;">Font</span>
<svg style="left:410px;top:212.300px" width="11" height="11" viewBox="0 0 11 11" fill="none" stroke="#3a3a3a" stroke-width="1.300"><path d="M.7 6.200V.7h8.600M3.800 3.800l6 6M10.100 5v5.100H5"></path></svg>
<div class="sep" style="left:424px;top:107px;height:115px"></div>
<!-- PARAGRAPH row 1 -->
<svg style="left:440.800px;top:111px" width="20" height="20" viewBox="0 0 20 20" fill="none">
<path d="M0 .1h4v4H0zM0 8h4v4H0zM0 15.600h4v4H0z" fill="#2b88d8"></path>
<path d="M6.600 2.100h12.800M6.600 10h12.800M6.600 17.600h12.800" stroke="#4a4a4a" stroke-width="1.500"></path></svg>
<svg class="chev" style="left:472px;top:120px" viewBox="0 0 7 4"><path d="M.5.500l3 3 3-3" fill="none" stroke="#2e2e2e" stroke-width="1.400"></path></svg>
<svg style="left:492.500px;top:111px" width="21" height="21" viewBox="0 0 21 21" fill="none">
<path d="M7.400 2.100h12.600M7.400 10h12.600M7.400 17.600h12.600" stroke="#4a4a4a" stroke-width="1.500"></path>
<text x="0" y="5.200" font-size="6.800" font-weight="bold" fill="#2b88d8" font-family="Liberation Sans">1</text>
<text x="0" y="12.800" font-size="6.800" font-weight="bold" fill="#2b88d8" font-family="Liberation Sans">2</text>
<text x="0" y="20.400" font-size="6.800" font-weight="bold" fill="#2b88d8" font-family="Liberation Sans">3</text></svg>
<svg class="chev" style="left:524.500px;top:120px" viewBox="0 0 7 4"><path d="M.5.500l3 3 3-3" fill="none" stroke="#2e2e2e" stroke-width="1.400"></path></svg>
<svg style="left:545.300px;top:111px" width="21" height="21" viewBox="0 0 21 21" fill="none">
<path d="M6.700 2.100h12.800M10.500 10h9M14.700 17.600h4.800" stroke="#4a4a4a" stroke-width="1.500"></path>
<text x=".4" y="5" font-size="7.200" font-weight="bold" fill="#2b88d8" font-family="Liberation Sans">1</text>
<text x="3.600" y="12.600" font-size="8" font-weight="bold" fill="#2b88d8" font-family="Liberation Sans">a</text>
<text x="10" y="20.400" font-size="8" font-weight="bold" fill="#2b88d8" font-family="Liberation Sans">i</text></svg>
<svg class="chev" style="left:574.700px;top:120px" viewBox="0 0 7 4"><path d="M.5.500l3 3 3-3" fill="none" stroke="#2e2e2e" stroke-width="1.400"></path></svg>
<div class="sep" style="left:595px;top:106.200px;height:30px"></div>
<svg style="left:604.500px;top:112.300px" width="19" height="17" viewBox="0 0 19 17" fill="none" stroke="#444" stroke-width="1.200">
<path d="M0 .8h18.400M10.500 6h7.900M10.500 11.100h7.900M0 16.300h18.400" stroke="#4a4a4a" stroke-width="1.500"></path><path d="M7.600 8.500H.8M3.600 5.500L.8 8.500l2.800 3" stroke="#2b88d8" stroke-width="1.500"></path></svg>
<svg style="left:637.900px;top:112.300px" width="19" height="17" viewBox="0 0 19 17" fill="none" stroke="#444" stroke-width="1.200">
<path d="M0 .8h18.400M10.500 6h7.900M10.500 11.100h7.900M0 16.300h18.400" stroke="#4a4a4a" stroke-width="1.500"></path><path d="M.2 8.500H7M4.200 5.500L7 8.500l-2.800 3" stroke="#2b88d8" stroke-width="1.500"></path></svg>
<!-- row 2 -->
<div class="a" style="left:435px;top:139.500px;width:29.700px;height:29px;border:1px solid #8e8e8e;border-radius:5.500px;background:#e8e8e8"></div>
<svg style="left:441.300px;top:145.700px" width="20" height="18" viewBox="0 0 20 18" stroke="#4a4a4a" stroke-width="1.500"><path d="M0 .7h18.600M0 6h12.700M0 11.300h18.600M0 16.600h12.700"></path></svg>
<svg style="left:474.700px;top:145.700px" width="20" height="18" viewBox="0 0 20 18" stroke="#4a4a4a" stroke-width="1.500"><path d="M0 .7h18.600M3 6h12.600M0 11.300h18.600M3 16.600h12.600"></path></svg>
<svg style="left:508.500px;top:145.700px" width="20" height="18" viewBox="0 0 20 18" stroke="#4a4a4a" stroke-width="1.500"><path d="M0 .7h18.600M5.900 6h12.700M0 11.300h18.600M5.900 16.600h12.700"></path></svg>
<svg style="left:542.100px;top:145.700px" width="20" height="18" viewBox="0 0 20 18" stroke="#4a4a4a" stroke-width="1.500"><path d="M0 .7h18.600M0 6h18.600M0 11.300h18.600M0 16.600h18.600"></path></svg>
<div class="sep" style="left:570px;top:140.300px;height:29.500px"></div>
<svg style="left:577.300px;top:145.700px" width="22" height="18" viewBox="0 0 22 18" fill="none" stroke="#444" stroke-width="1.200">
<path d="M10 .7h11.600M10 6h11.600M10 11.300h11.600M10 16.600h11.600" stroke="#4a4a4a" stroke-width="1.500"></path><path d="M3.600 1v6.600M.6 4L3.600 1l3 3M3.600 17.200v-6.600M.6 14.200l3 3 3-3" stroke="#2b88d8" stroke-width="1.500"></path></svg>
<svg class="chev" style="left:606.700px;top:154px" viewBox="0 0 7 4"><path d="M.5.500l3 3 3-3" fill="none" stroke="#2e2e2e" stroke-width="1.400"></path></svg>
<!-- row 3 -->
<svg style="left:440.800px;top:178px" width="21" height="21" viewBox="0 0 21 21" fill="none" stroke-linejoin="round">
<path d="M7.200 2.200L3.400 9l6.400 5.600 6-6.200-5.600-5z" stroke="#444" stroke-width="1.200" fill="#fff"></path>
<path d="M10.600 6.400V2a2 2 0 0 0-3.600-1l-.6 1.400" stroke="#444" stroke-width="1.100"></path>
<path d="M13.600 6.200c2.600.4 4 2.400 3.600 5.600-.8-1.800-1.800-2.600-3-2.800" stroke="#2b88d8" stroke-width="1.300" fill="#2b88d8"></path>
<rect x=".5" y="16.600" width="19.500" height="3.800" stroke="#9a9a9a" stroke-width="1" fill="#fff"></rect></svg>
<svg class="chev" style="left:472px;top:186.500px" viewBox="0 0 7 4"><path d="M.5.500l3 3 3-3" fill="none" stroke="#2e2e2e" stroke-width="1.400"></path></svg>
<svg style="left:492.500px;top:178.200px" width="21" height="20" viewBox="0 0 21 20" fill="none">
<path d="M.6.600h19.200M.6.600v16M19.800.6v16M10.200.6v16M.6 9.400h19.200" stroke="#555" stroke-width="1.100" stroke-dasharray="1.200 1.200"></path>
<circle cx="10.200" cy="9.400" r="1.300" fill="#fff" stroke="#555" stroke-width=".8"></circle>
<path d="M0 18.800h20.400" stroke="#333" stroke-width="1.600"></path></svg>
<svg class="chev" style="left:524.500px;top:186.500px" viewBox="0 0 7 4"><path d="M.5.500l3 3 3-3" fill="none" stroke="#2e2e2e" stroke-width="1.400"></path></svg>
<div class="sep" style="left:541px;top:173.700px;height:29.800px"></div>
<span style="color: rgb(43, 136, 216); -webkit-text-stroke: 0.3px rgb(43, 136, 216); position: absolute; white-space: pre; line-height: 1; font-size: 12.3px; left: 549px; top: 177px; letter-spacing: 1.297px; transform: none;">A</span>
<span style="color: rgb(51, 51, 51); -webkit-text-stroke: 0.3px rgb(51, 51, 51); position: absolute; white-space: pre; line-height: 1; font-size: 12.3px; left: 549.5px; top: 189px; letter-spacing: 0.984px; transform: none;">Z</span>
<svg style="left:560.500px;top:178.200px" width="11" height="21" viewBox="0 0 11 21" fill="none" stroke="#444" stroke-width="1.400"><path d="M5.400.4v19.400M.8 15.200l4.600 4.600 4.600-4.600"></path></svg>
<div class="sep" style="left:578px;top:173.700px;height:29.800px"></div>
<svg style="left:590px;top:181px" width="14" height="16" viewBox="0 0 14 16"><path d="M6.400 0h7v1.400h-1.800V15.400H10V1.400H8v14H6.400V8.200C2.800 8.200.4 6.600.4 4.100S2.800 0 6.400 0z" fill="#444"></path></svg>
<span style="color: rgb(68, 68, 68); position: absolute; white-space: pre; line-height: 1; font-size: 13.4px; left: 508px; top: 210px; letter-spacing: -0.256px; transform: none;">Paragraph</span>
<svg style="left:657.300px;top:212.300px" width="11" height="11" viewBox="0 0 11 11" fill="none" stroke="#3a3a3a" stroke-width="1.300"><path d="M.7 6.200V.7h8.600M3.800 3.800l6 6M10.100 5v5.100H5"></path></svg>
<div class="sep" style="left:672px;top:107px;height:115px"></div>
<!-- STYLES -->
<div class="a" style="left:685.400px;top:115.200px;width:449.300px;height:76.200px;border:1px solid #d0d0d0;border-radius:0 5px 5px 0;background:#fff"></div>
<div class="a" style="left:686.300px;top:118.200px;width:137px;height:69.800px;border:1px solid #6e6e6e;background:#fff;box-shadow:inset 0 0 0 4.200px #e6e6e6"></div>
<span style="color: rgb(17, 17, 17); -webkit-text-stroke: 0.2px rgb(17, 17, 17); position: absolute; white-space: pre; line-height: 1; font-size: 16.8px; left: 725.5px; top: 148px; letter-spacing: 0.459px; transform: scaleX(1.08); transform-origin: 0px 0px;">Normal</span>
<span style="color: rgb(17, 17, 17); -webkit-text-stroke: 0.2px rgb(17, 17, 17); position: absolute; white-space: pre; line-height: 1; font-size: 16.8px; left: 849.1px; top: 148px; letter-spacing: 0.013px; transform: scaleX(1.06); transform-origin: 0px 0px;">No Spacing</span>
<span style="color: rgb(15, 71, 97); position: absolute; white-space: pre; line-height: 1; font-size: 31px; left: 972.9px; top: 140px; letter-spacing: -0.431px; transform: none;">Heading</span>
<div class="a" style="left:1096px;top:148px;width:1px;height:2px;background:#9ab"></div>
<div class="a" style="left:1105.400px;top:115.200px;width:29.300px;height:76.200px;border:1px solid #777;border-radius:0 5px 5px 0;background:#fff"></div>
<svg style="left:1114.600px;top:148.500px" width="10" height="8" viewBox="0 0 10 8" fill="none" stroke="#222" stroke-width="1.500"><path d="M.2.600h9.600M1.400 3.600L5 7.200l3.600-3.600"></path></svg>
<span style="color: rgb(68, 68, 68); position: absolute; white-space: pre; line-height: 1; font-size: 13.4px; left: 883.2px; top: 210px; letter-spacing: -0.514px; transform: none;">Styles</span>
<svg style="left:1134px;top:212.300px" width="11" height="11" viewBox="0 0 11 11" fill="none" stroke="#3a3a3a" stroke-width="1.300"><path d="M.7 6.200V.7h8.600M3.800 3.800l6 6M10.100 5v5.100H5"></path></svg>
<div class="sep" style="left:1149px;top:107px;height:115px"></div>
<!-- EDITING -->
<svg style="left:1164.700px;top:108.900px" width="39" height="39" viewBox="0 0 39 39" fill="none" stroke="#444" stroke-width="1.400" stroke-linecap="round"><circle cx="24.600" cy="14" r="13"></circle><path d="M15.200 23.600L.8 37.600"></path></svg>
<span style="position: absolute; white-space: pre; line-height: 1; font-size: 16px; left: 1160.7px; top: 154px; letter-spacing: -0.119px; transform: scaleX(0.95); transform-origin: 0px 0px;">Editing</span>
<svg class="chev" style="left:1180px;top:179.500px" viewBox="0 0 7 4"><path d="M.5.500l3 3 3-3" fill="none" stroke="#2e2e2e" stroke-width="1.400"></path></svg>
<div class="sep" style="left:1219px;top:107px;height:115px"></div>
<!-- DICTATE -->
<svg style="left:1244.500px;top:110.500px" width="24" height="39" viewBox="0 0 24 39" fill="none" stroke-linecap="round">
<rect x="5.200" y=".8" width="13.600" height="26" rx="6.800" fill="#83b9ee" stroke="#1b6ccb" stroke-width="1.600"></rect>
<path d="M.8 19.200v1.600a11.200 11.200 0 0 0 22.400 0v-1.600M12 32v6" stroke="#3a3a3a" stroke-width="1.400"></path></svg>
<span style="position: absolute; white-space: pre; line-height: 1; font-size: 16px; left: 1233.4px; top: 159px; letter-spacing: -0.177px; transform: scaleX(0.95); transform-origin: 0px 0px;">Dictate</span>
<svg class="chev" style="left:1252px;top:183.600px" viewBox="0 0 7 4"><path d="M.5.500l3 3 3-3" fill="none" stroke="#2e2e2e" stroke-width="1.400"></path></svg>
<span style="color: rgb(68, 68, 68); position: absolute; white-space: pre; line-height: 1; font-size: 13.4px; left: 1240.5px; top: 211px; letter-spacing: -0.241px; transform: none;">Voice</span>
<div class="sep" style="left:1293px;top:107px;height:115px"></div>
<!-- ADDINS -->
<svg style="left:1316.200px;top:112px" width="37" height="37" viewBox="0 0 37 37" fill="none" stroke="#d83b01"><rect x=".9" y=".9" width="34.400" height="34.400" stroke-width="1.800"></rect><path d="M5 5h11.200v11.200H5zM20 5h11.200v11.200H20zM5 20h11.200v11.200H5zM20 20h11.200v11.200H20z" stroke-width="1.400"></path></svg>
<span style="position: absolute; white-space: pre; line-height: 1; font-size: 16px; left: 1306.9px; top: 157px; letter-spacing: 0.151px; transform: scaleX(0.97); transform-origin: 0px 0px;">Add-ins</span>
<span style="color: rgb(68, 68, 68); position: absolute; white-space: pre; line-height: 1; font-size: 13.4px; left: 1310.6px; top: 211px; letter-spacing: -0.034px; transform: none;">Add-ins</span>
<div class="sep" style="left:1374px;top:107px;height:115px"></div>
<!-- EDITOR -->
<svg style="left:1391.500px;top:109.500px" width="41" height="41" viewBox="0 0 41 41" fill="none" stroke-linejoin="round">
<path d="M20 11.600h16.300a3.100 3.100 0 0 1 0 6.200H16z" fill="#185abd"></path>
<path d="M14 21h15.800a3 3 0 0 1 0 6H10z" fill="#185abd"></path>
<path d="M8 30.100h15.700a3 3 0 0 1 0 6H4z" fill="#185abd"></path>
<path d="M22.700 2.700l7.600 4.700L9.800 33.200 1.100 39.200l1.600-10z" fill="#f5f5f5" stroke="#185abd" stroke-width="1.900"></path>
<path d="M22.700 2.700l1.900-2.500 7.500 4.700-1.800 2.500z" fill="#185abd" stroke="#185abd" stroke-width="1.200"></path>
<path d="M1.100 39.200l.6-3.600 2.500 1.600z" fill="#185abd" stroke="#185abd" stroke-width="1"></path></svg>
<span style="position: absolute; white-space: pre; line-height: 1; font-size: 16px; left: 1391.3px; top: 157px; letter-spacing: 0.041px; transform: scaleX(0.95); transform-origin: 0px 0px;">Editor</span>
<!-- COPILOT icon -->
<svg width="0" height="0" style="left:0;top:0"><defs>
<linearGradient id="cgL" x1="0" y1="0" x2="0" y2="1"><stop offset="0" stop-color="#18a3f7"></stop><stop offset=".3" stop-color="#1d92e2"></stop><stop offset=".55" stop-color="#45b383"></stop><stop offset=".8" stop-color="#b4c727"></stop><stop offset="1" stop-color="#f7d000"></stop></linearGradient>
<linearGradient id="cgR" x1="0" y1="0" x2="0" y2="1"><stop offset="0" stop-color="#9d46ee"></stop><stop offset=".3" stop-color="#d64fc0"></stop><stop offset=".55" stop-color="#f2578d"></stop><stop offset="1" stop-color="#fb9450"></stop></linearGradient>
<linearGradient id="cgB" x1="0" y1="0" x2="0" y2="1"><stop offset="0" stop-color="#1038c9"></stop><stop offset="1" stop-color="#2f7fe8"></stop></linearGradient>
<linearGradient id="cgO" x1="0" y1="0" x2="0" y2="1"><stop offset="0" stop-color="#f7863c"></stop><stop offset="1" stop-color="#d62c24"></stop></linearGradient>
<symbol id="copilot" viewBox="0 0 39 36">
<path d="M21.500 1.100c2.500 0 5 .2 6.300 2.400 1 2 1.200 4.500 3.200 6.400l-1 .4H18.900c.6-3.900.9-6.900 2.600-9.200z" fill="url(#cgB)"></path>
<path d="M8.500 26h11.100c-.3 4-.6 7-2.600 8.800-2.500 0-4.800-.2-6-2.300-1-2-1-4.500-2.500-6.500z" fill="url(#cgO)"></path>
<path d="M9 1.100h12.500c-2 1.400-2.700 4.900-3.500 8.900l-3 12c-.4 2-1 3.600-3 3.600H4.500C1.800 25.600.4 23.500.8 20.500c.5-4.500 1.400-9.500 2.500-13C4.500 3.500 6 1.100 9 1.100z" fill="url(#cgL)"></path>
<path d="M25.500 10.300h9c3 0 4.300 2.200 3.800 5.200-.5 4-1.500 8.500-2.800 12-1.500 4-2.500 7.300-6 7.300H17c2-1.300 2.500-4.300 3.300-7.800L23 15.500c.5-2.500 1-5.200 2.500-5.200z" fill="url(#cgR)"></path>
</symbol></defs></svg>
<svg style="left:1449px;top:112px" width="39" height="36"><use href="#copilot"></use></svg>
<span style="position: absolute; white-space: pre; line-height: 1; font-size: 16px; left: 1443.9px; top: 157px; letter-spacing: 0.099px; transform: scaleX(0.98); transform-origin: 0px 0px;">Copilot</span>
<div class="sep" style="left:1506px;top:107px;height:115px"></div>
<svg style="left:1616.900px;top:209.400px" width="13" height="7" viewBox="0 0 13 7" fill="none" stroke="#333" stroke-width="1.300"><path d="M.5.500l5.800 5.800L12.100.5"></path></svg>
</div>
</body></html>
